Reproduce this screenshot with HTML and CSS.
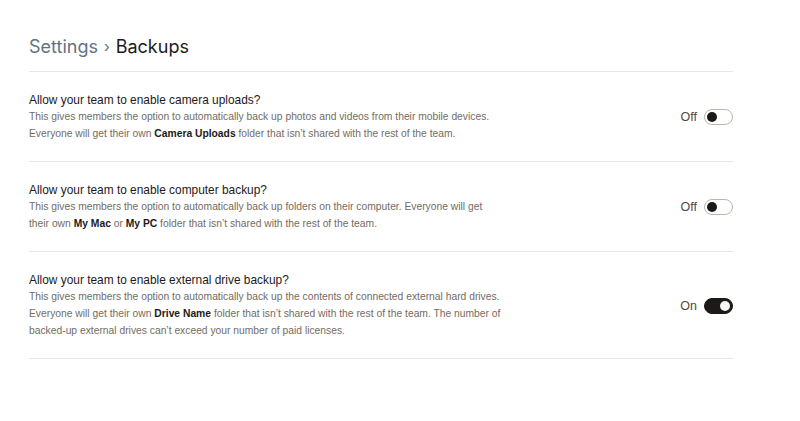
FILE: index.html
```html
<!DOCTYPE html>
<html lang="en">
<head>
    <meta charset="UTF-8">
    <meta name="viewport" content="width=device-width, initial-scale=1.0">
    <title>Backups - Settings</title>
    <link rel="stylesheet" href="styles.css">
</head>
<body>
    <div class="page">
        <h1 class="crumbs">
            <span class="crumb-parent">Settings</span>
            <span class="crumb-sep">&rsaquo;</span>
            <span class="crumb-current">Backups</span>
        </h1>

        <div class="setting">
            <div class="setting-text">
                <h2>Allow your team to enable camera uploads?</h2>
                <p>This gives members the option to automatically back up photos and videos from their mobile devices. Everyone will get their own <strong>Camera Uploads</strong> folder that isn&rsquo;t shared with the rest of the team.</p>
            </div>
            <label class="switch">
                <span class="switch-label">Off</span>
                <span class="toggle"><span class="knob"></span></span>
            </label>
        </div>

        <div class="setting">
            <div class="setting-text">
                <h2>Allow your team to enable computer backup?</h2>
                <p>This gives members the option to automatically back up folders on their computer. Everyone will get their own <strong>My Mac</strong> or <strong>My PC</strong> folder that isn&rsquo;t shared with the rest of the team.</p>
            </div>
            <label class="switch">
                <span class="switch-label">Off</span>
                <span class="toggle"><span class="knob"></span></span>
            </label>
        </div>

        <div class="setting">
            <div class="setting-text">
                <h2>Allow your team to enable external drive backup?</h2>
                <p>This gives members the option to automatically back up the contents of connected external hard drives. Everyone will get their own <strong>Drive Name</strong> folder that isn&rsquo;t shared with the rest of the team. The number of backed-up external drives can&rsquo;t exceed your number of paid licenses.</p>
            </div>
            <label class="switch">
                <span class="switch-label">On</span>
                <span class="toggle toggle-on"><span class="knob"></span></span>
            </label>
        </div>
    </div>
</body>
</html>
```

FILE: styles.css
```css
body {
    font-family: Inter, "Liberation Sans", Arial, sans-serif;
    margin: 0;
    background-color: #fff;
    color: #1e1919;
}
.page {
    width: 704px;
    padding: 35px 0 0 29px;
}
.crumbs {
    margin: 0;
    padding-bottom: 12px;
    border-bottom: 1px solid #e8e6e4;
    font-size: 18px;
    line-height: 24px;
    font-weight: 400;
    display: flex;
    align-items: center;
    gap: 6px;
}
.crumb-parent {
    color: #637282;
}
.crumb-sep {
    color: #637282;
    font-size: 15px;
}
.setting {
    display: flex;
    align-items: center;
    justify-content: space-between;
    padding: 20px 0 19px;
    border-bottom: 1px solid #e8e6e4;
    font-family: "Liberation Sans", Arial, sans-serif;
}
.setting-text {
    width: 473px;
}
.setting h2 {
    margin: 0;
    font-size: 11.9px;
    line-height: 16px;
    font-weight: 400;
}
.setting p {
    margin: 0;
    font-size: 10.3px;
    line-height: 17px;
    color: #736c64;
}
.setting strong {
    font-weight: 700;
    color: #1e1919;
}
.switch {
    display: flex;
    align-items: center;
    gap: 7px;
}
.switch-label {
    font-size: 12.5px;
    color: #524a3e;
}
.toggle {
    box-sizing: border-box;
    width: 29px;
    height: 16px;
    border: 1px solid #bbb5ae;
    border-radius: 8px;
    display: flex;
    align-items: center;
    padding: 0 2px;
    background-color: #fff;
}
.knob {
    width: 10px;
    height: 10px;
    border-radius: 50%;
    background-color: #1e1919;
}
.toggle-on {
    background-color: #1e1919;
    border-color: #1e1919;
    justify-content: flex-end;
}
.toggle-on .knob {
    background-color: #f7f5f2;
}
```
